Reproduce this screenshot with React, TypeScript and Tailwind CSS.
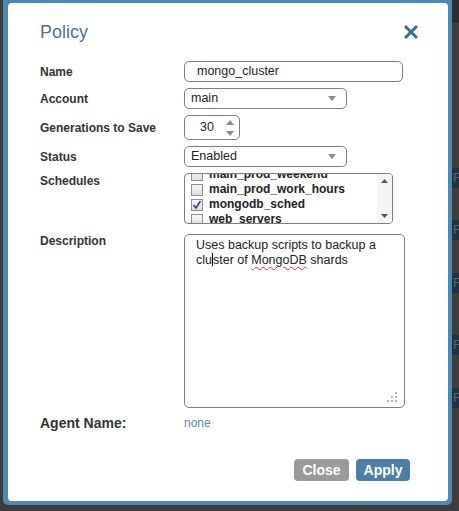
const LABEL = "w-[144px] shrink-0 text-[12px] font-bold text-[#333]";

const SCHEDULES = [
  { name: "main_prod_weekend", checked: false },
  { name: "main_prod_work_hours", checked: false },
  { name: "mongodb_sched", checked: true },
  { name: "web_servers", checked: false },
];

function Caret() {
  return (
    <svg width="8" height="5" viewBox="0 0 8 5">
      <path d="M0 0 L8 0 L4 5 Z" fill="#8a8a8a" />
    </svg>
  );
}

function Checkbox({ checked }: { checked: boolean }) {
  return (
    <span className="w-[12px] h-[12px] shrink-0 border border-[#8e8f8f] bg-gradient-to-b from-[#f6f6f6] to-[#dedede] flex items-center justify-center">
      {checked && (
        <svg width="10" height="10" viewBox="0 0 10 10">
          <path d="M1.5 5 L4 8 L8.5 1" fill="none" stroke="#2d3f86" strokeWidth="1.6" />
        </svg>
      )}
    </span>
  );
}

function SideBlocks() {
  // bits of the page behind the modal, visible on the right edge
  const tops = [146, 32, 33, 42, 33];
  return (
    <div className="w-[7px] shrink-0 flex flex-col">
      <div className="h-[22px] bg-[#2b2e33] border-b border-[#222]" />
      {tops.map((t, i) => (
        <div
          key={i}
          className="h-[20px] bg-[#1f3244] text-[13px] leading-[20px] text-[#56677a] pl-[1px] overflow-hidden font-['Liberation_Sans',sans-serif]"
          style={{ marginTop: t }}
        >
          F
        </div>
      ))}
    </div>
  );
}

export default function App() {
  return (
    <div className="w-[459px] h-[511px] overflow-hidden bg-[#3d3d3d] flex items-start font-['Liberation_Sans',Arial,sans-serif]">
      <div className="w-[3px] shrink-0" />

      {/* Modal */}
      <div className="w-[449px] h-[505px] shrink-0 bg-[#4c89b3] pl-[5px] pt-[3px] pr-[4px] pb-[4px] rounded-b-[5px]">
        <div className="w-full h-full bg-white rounded-[4px] pl-[32px] pr-[30px] flex flex-col">
          {/* Header */}
          <div className="mt-[14px] h-[30px] flex items-center justify-between">
            <h2 className="text-[18px] leading-[30px] text-[#4d7192]">Policy</h2>
            <svg width="14" height="14" viewBox="0 0 14 14" className="mb-[1px]">
              <path d="M2 2 L12 12 M12 2 L2 12" stroke="#3c6d93" strokeWidth="3" strokeLinecap="square" />
            </svg>
          </div>

          {/* Name */}
          <div className="mt-[14px] flex items-center">
            <div className={LABEL}>Name</div>
            <div className="w-[219px] h-[21px] border border-[#7d7d7d] rounded-[5px] pl-[12px] text-[12.5px] leading-[19px] text-[#222]">
              mongo_cluster
            </div>
          </div>

          {/* Account */}
          <div className="mt-[6px] flex items-center">
            <div className={LABEL}>Account</div>
            <div className="w-[163px] h-[21px] border border-[#7d7d7d] rounded-[5px] pl-[6px] pr-[10px] flex items-center justify-between text-[12.5px] text-[#222]">
              <span>main</span>
              <Caret />
            </div>
          </div>

          {/* Generations */}
          <div className="mt-[6px] flex items-center">
            <div className={LABEL}>Generations to Save</div>
            <div className="w-[56px] h-[25px] border border-[#7d7d7d] rounded-[5px] pl-[15px] pr-[5px] flex items-center justify-between text-[12.5px] text-[#222]">
              <span>30</span>
              <div className="flex flex-col gap-[6px]">
                <svg width="8" height="5" viewBox="0 0 8 5">
                  <path d="M0 5 L8 5 L4 0 Z" fill="#8a8a8a" />
                </svg>
                <Caret />
              </div>
            </div>
          </div>

          {/* Status */}
          <div className="mt-[6px] flex items-center">
            <div className={LABEL}>Status</div>
            <div className="w-[163px] h-[21px] border border-[#7d7d7d] rounded-[5px] pl-[6px] pr-[10px] flex items-center justify-between text-[12.5px] text-[#222]">
              <span>Enabled</span>
              <Caret />
            </div>
          </div>

          {/* Schedules */}
          <div className="mt-[6px] flex items-start">
            <div className={`${LABEL} leading-[16px]`}>Schedules</div>
            <div className="w-[209px] h-[51px] border border-[#7d7d7d] rounded-[4px] overflow-hidden flex">
              <div className="flex-1 overflow-hidden pl-[6px]">
                <div className="mt-[-7px]">
                  {SCHEDULES.map(s => (
                    <div key={s.name} className="h-[15px] flex items-center gap-[6px] text-[12px] font-bold text-[#222]">
                      <Checkbox checked={s.checked} />
                      <span className="leading-[15px]">{s.name}</span>
                    </div>
                  ))}
                </div>
              </div>
              <div className="w-[15px] shrink-0 bg-[#f4f4f4] flex flex-col items-center justify-between py-[5px]">
                <svg width="7" height="4" viewBox="0 0 7 4">
                  <path d="M0 4 L7 4 L3.5 0 Z" fill="#555" />
                </svg>
                <svg width="7" height="4" viewBox="0 0 7 4">
                  <path d="M0 0 L7 0 L3.5 4 Z" fill="#555" />
                </svg>
              </div>
            </div>
          </div>

          {/* Description */}
          <div className="mt-[10px] flex items-start">
            <div className={`${LABEL} leading-[14px]`}>Description</div>
            <div className="w-[221px] h-[174px] border border-[#7d7d7d] rounded-[5px] pl-[11px] pt-[3px] pr-[6px] pb-[4px] flex flex-col justify-between text-[12.5px] leading-[15px] text-[#222]">
              <p>
                Uses backup scripts to backup a{" "}
                <span className="whitespace-nowrap">
                  clu
                  <span className="inline-block w-[1px] h-[13px] bg-black align-[-2px]" />
                  ster
                </span>{" "}
                of{" "}
                <span className="underline decoration-wavy decoration-[#e03030] decoration-1 underline-offset-2">MongoDB</span>{" "}
                shards
              </p>
              <div className="self-end">
                <svg width="11" height="11" viewBox="0 0 11 11">
                  <g fill="#b5b5b5">
                    <rect x="8" y="0" width="2" height="2" />
                    <rect x="4" y="4" width="2" height="2" />
                    <rect x="8" y="4" width="2" height="2" />
                    <rect x="0" y="8" width="2" height="2" />
                    <rect x="4" y="8" width="2" height="2" />
                    <rect x="8" y="8" width="2" height="2" />
                  </g>
                </svg>
              </div>
            </div>
          </div>

          {/* Agent name */}
          <div className="mt-[7px] h-[16px] flex items-center">
            <div className="w-[144px] shrink-0 text-[14px] font-bold text-[#333]">Agent Name:</div>
            <div className="text-[12px] text-[#5b8cb6]">none</div>
          </div>

          {/* Footer */}
          <div className="mt-[28px] flex justify-end gap-[7px] pr-[8px]">
            <button className="w-[55px] h-[22px] rounded-[4px] bg-[#9a9a9a] text-white text-[14px] font-bold leading-[22px]">
              Close
            </button>
            <button className="w-[54px] h-[22px] rounded-[4px] bg-[#4a7fa9] text-white text-[14px] font-bold leading-[22px]">
              Apply
            </button>
          </div>
        </div>
      </div>

      <SideBlocks />
    </div>
  );
}
